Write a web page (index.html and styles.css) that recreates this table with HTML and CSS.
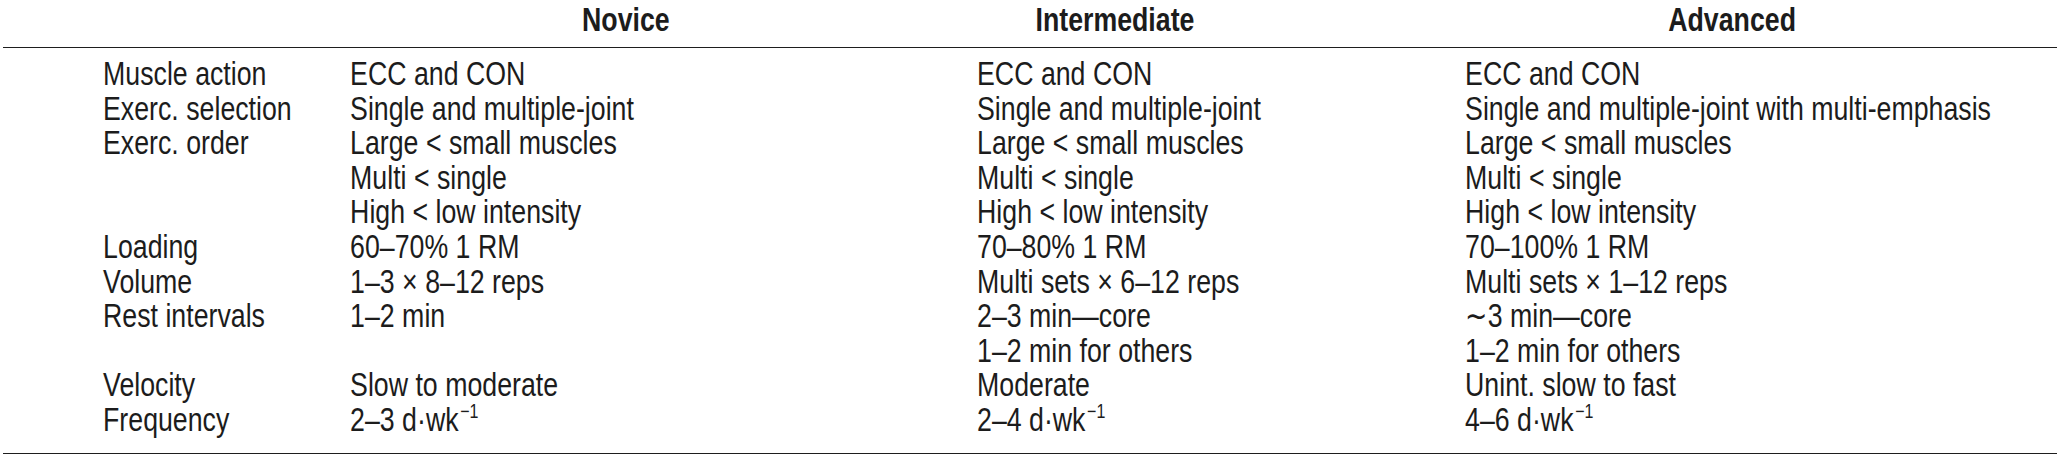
FILE: index.html
```html
<!DOCTYPE html>
<html lang="en">
<head>
<meta charset="utf-8">
<title>Resistance training recommendations</title>
<link rel="stylesheet" href="styles.css">
</head>
<body>
<div class="page">
<div class="table">
  <div class="head">
    <div class="h-empty"></div>
    <div class="h-cell h-novice">Novice</div>
    <div class="h-cell h-inter">Intermediate</div>
    <div class="h-cell h-adv">Advanced</div>
  </div>
  <div class="body">
    <div class="label">Muscle action</div>
    <div>ECC and CON</div>
    <div>ECC and CON</div>
    <div>ECC and CON</div>

    <div class="label">Exerc. selection</div>
    <div>Single and multiple-joint</div>
    <div>Single and multiple-joint</div>
    <div>Single and multiple-joint with multi-emphasis</div>

    <div class="label">Exerc. order</div>
    <div><div>Large &lt; small muscles</div><div>Multi &lt; single</div><div>High &lt; low intensity</div></div>
    <div><div>Large &lt; small muscles</div><div>Multi &lt; single</div><div>High &lt; low intensity</div></div>
    <div><div>Large &lt; small muscles</div><div>Multi &lt; single</div><div>High &lt; low intensity</div></div>

    <div class="label">Loading</div>
    <div>60–70% 1 RM</div>
    <div>70–80% 1 RM</div>
    <div>70–100% 1 RM</div>

    <div class="label">Volume</div>
    <div>1–3 × 8–12 reps</div>
    <div>Multi sets × 6–12 reps</div>
    <div>Multi sets × 1–12 reps</div>

    <div class="label">Rest intervals</div>
    <div>1–2 min</div>
    <div><div>2–3 min—core</div><div>1–2 min for others</div></div>
    <div><div>∼3 min—core</div><div>1–2 min for others</div></div>

    <div class="label">Velocity</div>
    <div>Slow to moderate</div>
    <div>Moderate</div>
    <div>Unint. slow to fast</div>

    <div class="label">Frequency</div>
    <div>2–3 d·wk<sup>−1</sup></div>
    <div>2–4 d·wk<sup>−1</sup></div>
    <div>4–6 d·wk<sup>−1</sup></div>
  </div>
</div>
</div>
</body>
</html>
```

FILE: styles.css
```css
html, body {
  margin: 0;
  padding: 0;
  background: #ffffff;
  overflow: hidden;
}

body {
  font-family: "Liberation Sans", Arial, sans-serif;
  color: #1c1c1c;
  font-size: 33px;
  line-height: 34.6px;
}

.page {
  width: 2057px;
  height: 461px;
  overflow: clip;
}

/* Condensed type: the table is drawn narrow (Helvetica Condensed look) */
.table {
  margin-left: 3px;
  width: 2535.8px;
  transform: scaleX(0.81);
  transform-origin: 0 0;
  white-space: nowrap;
}

.head {
  display: grid;
  grid-template-columns: 500px 538px 669.6px 1fr;
  box-sizing: border-box;
  height: 48px;
  padding-top: 3px;
  border-bottom: 1px solid #1e1e1e;
  font-weight: bold;
}

.h-cell {
  text-align: center;
}

.h-adv {
  padding-left: 26px;
}

.body {
  display: grid;
  grid-template-columns: 305px 774px 602.5px 1fr;
  padding: 9px 0 15px 123.5px;
  border-bottom: 1px solid #1e1e1e;
}

sup {
  font-size: 0.6em;
  line-height: 0;
  vertical-align: 0.65em;
  margin-left: 2px;
}
```
